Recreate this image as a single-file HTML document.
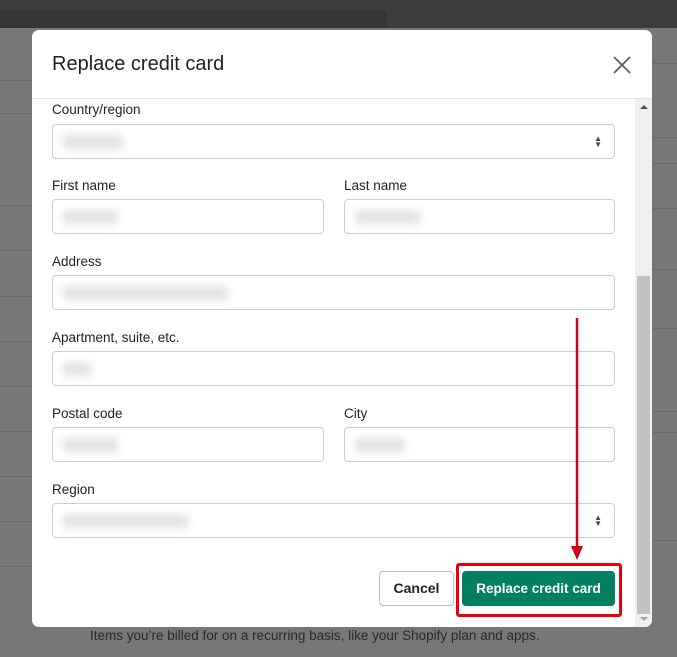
<!DOCTYPE html>
<html><head><style>
*{box-sizing:border-box;margin:0;padding:0}
body{width:677px;height:657px;overflow:hidden;background:#777;font-family:"Liberation Sans",sans-serif;position:relative}
.top{position:absolute;left:0;top:0;width:677px;height:28px;background:#3c3c3c}
.tb{position:absolute;left:0;top:10px;width:387px;height:18px;background:#353535;border-radius:0 4px 0 0}
.hl{position:absolute;height:1px;background:#6a6a6a}
.modal{position:absolute;left:32px;top:30px;width:620px;height:597px;background:#fff;border-radius:7px;overflow:hidden}
.hdr{height:69px;border-bottom:1px solid #e1e3e5;position:relative}
.hdr h1{position:absolute;left:20px;top:23px;font-size:20px;font-weight:normal;color:#202223}
.lbl{position:absolute;font-size:13.5px;color:#202223}
.in{position:absolute;height:35px;border:1px solid #c9cccf;border-radius:4px;background:#fff}
.blur{position:absolute;left:10px;top:10px;height:14px;background:#e2e2e2;filter:blur(4px);border-radius:3px}
.sel{position:absolute;right:12px;top:11px;font-size:8px;line-height:6px;color:#444}
.sb{position:absolute;left:603px;top:69px;width:17px;height:528px;background:#f0f0f0}
.thumb{position:absolute;left:2px;top:177px;width:13px;height:338px;background:#c1c1c1}
.btn{position:absolute;top:541px;height:35px;border-radius:4px;font-size:14px;text-align:center;line-height:35px}
</style></head><body>
<div class="top"><div class="tb"></div></div>
<div class="hl" style="left:0;top:80px;width:32px"></div>
<div class="hl" style="left:0;top:113px;width:32px"></div>
<div class="hl" style="left:0;top:205px;width:32px"></div>
<div class="hl" style="left:0;top:250px;width:32px"></div>
<div class="hl" style="left:0;top:296px;width:32px"></div>
<div class="hl" style="left:0;top:341px;width:32px"></div>
<div class="hl" style="left:0;top:386px;width:32px"></div>
<div class="hl" style="left:0;top:431px;width:32px"></div>
<div class="hl" style="left:0;top:476px;width:32px"></div>
<div class="hl" style="left:0;top:521px;width:32px"></div>
<div class="hl" style="left:0;top:566px;width:32px"></div>
<div class="hl" style="left:652px;top:63px;width:25px"></div>
<div class="hl" style="left:652px;top:137px;width:25px"></div>
<div class="hl" style="left:652px;top:163px;width:25px"></div>
<div class="hl" style="left:652px;top:208px;width:25px"></div>
<div class="hl" style="left:652px;top:269px;width:25px"></div>
<div class="hl" style="left:652px;top:328px;width:25px"></div>
<div class="hl" style="left:652px;top:411px;width:25px"></div>
<div class="hl" style="left:652px;top:432px;width:25px"></div>
<div class="hl" style="left:652px;top:540px;width:25px"></div>
<div style="position:absolute;left:90px;top:628px;font-size:13.5px;color:#2a2a2a">Items you’re billed for on a recurring basis, like your Shopify plan and apps.</div>
<div class="modal">
 <div class="hdr"><h1>Replace credit card</h1>
  <svg style="position:absolute;left:581px;top:26px" width="18" height="18" viewBox="0 0 18 18"><path d="M1 1L17 17M17 1L1 17" stroke="#5c5f62" stroke-width="1.8"/></svg>
 </div>
 <div class="lbl" style="left:20px;top:72px">Country/region</div>
 <div class="in" style="left:20px;top:94px;width:563px"><div class="blur" style="width:60px"></div><div class="sel">▲<br>▼</div></div>
 <div class="lbl" style="left:20px;top:148px">First name</div>
 <div class="in" style="left:20px;top:169px;width:272px"><div class="blur" style="width:55px"></div></div>
 <div class="lbl" style="left:312px;top:148px">Last name</div>
 <div class="in" style="left:312px;top:169px;width:271px"><div class="blur" style="width:65px"></div></div>
 <div class="lbl" style="left:20px;top:224px">Address</div>
 <div class="in" style="left:20px;top:245px;width:563px"><div class="blur" style="width:165px"></div></div>
 <div class="lbl" style="left:20px;top:300px">Apartment, suite, etc.</div>
 <div class="in" style="left:20px;top:321px;width:563px"><div class="blur" style="width:28px"></div></div>
 <div class="lbl" style="left:20px;top:376px">Postal code</div>
 <div class="in" style="left:20px;top:397px;width:272px"><div class="blur" style="width:55px"></div></div>
 <div class="lbl" style="left:312px;top:376px">City</div>
 <div class="in" style="left:312px;top:397px;width:271px"><div class="blur" style="width:50px"></div></div>
 <div class="lbl" style="left:20px;top:452px">Region</div>
 <div class="in" style="left:20px;top:473px;width:563px"><div class="blur" style="width:125px"></div><div class="sel">▲<br>▼</div></div>
 <div class="btn" style="left:347px;width:75px;border:1px solid #babfc3;color:#202223;font-weight:bold;line-height:33px">Cancel</div>
 <div style="position:absolute;left:424px;top:533px;width:166px;height:54px;border:3px solid #e8000b;border-radius:3px"></div>
 <div class="btn" style="left:430px;width:153px;background:#008060;color:#fff;font-weight:bold;font-size:13.5px">Replace credit card</div>
 <div class="sb"><div style="position:absolute;left:5px;top:6px;width:0;height:0;border-left:4px solid transparent;border-right:4px solid transparent;border-bottom:4px solid #505050"></div><div class="thumb"></div><div style="position:absolute;left:5px;top:518px;width:0;height:0;border-left:4px solid transparent;border-right:4px solid transparent;border-top:4px solid #a3a3a3"></div></div>
</div>
<svg style="position:absolute;left:569px;top:318px" width="16" height="244"><path d="M8 0V232" stroke="#d0021b" stroke-width="2.5"/><path d="M2 228L8 242L14 228Z" fill="#d0021b"/></svg>
</body></html>
